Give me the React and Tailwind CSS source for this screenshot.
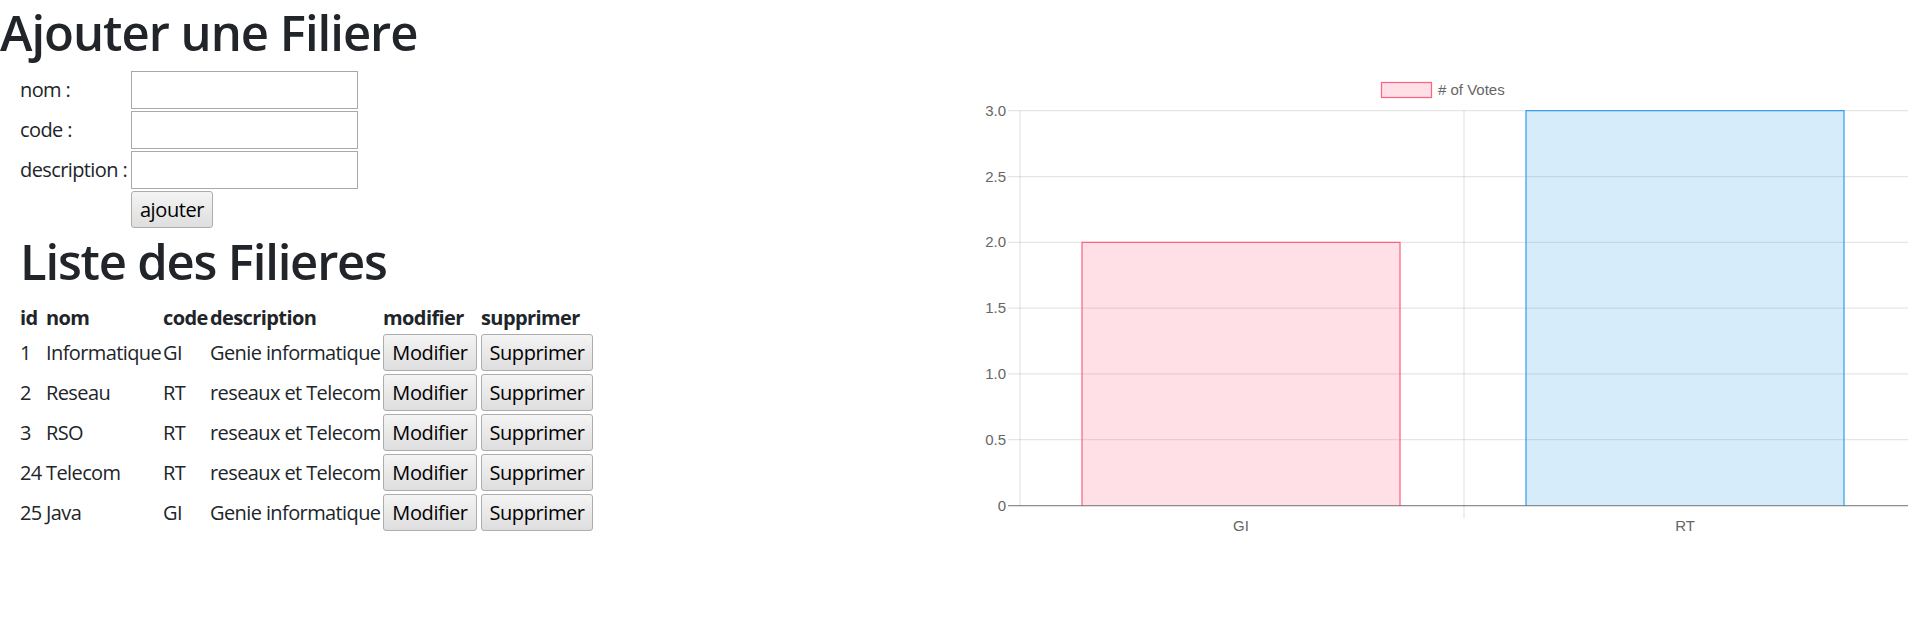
import React from 'react';

const filieres = [
  { id: 1, nom: 'Informatique', code: 'GI', description: 'Genie informatique' },
  { id: 2, nom: 'Reseau', code: 'RT', description: 'reseaux et Telecom' },
  { id: 3, nom: 'RSO', code: 'RT', description: 'reseaux et Telecom' },
  { id: 24, nom: 'Telecom', code: 'RT', description: 'reseaux et Telecom' },
  { id: 25, nom: 'Java', code: 'GI', description: 'Genie informatique' },
];

const cols = 'grid grid-cols-[26px_117px_47px_173px_98px_112px]';

function WinButton({ children, className = '' }) {
  return (
    <button
      className={`h-[37px] rounded-[3px] border border-[#adadad] bg-gradient-to-b from-[#f4f4f4] to-[#dedede] px-[7px] text-[20px] leading-none text-black tracking-[-0.4px] ${className}`}
    >
      {children}
    </button>
  );
}

function VotesChart() {
  // page coords minus 960
  const top = 110.7;
  const zero = 505.5;
  const step = (zero - top) / 6;
  const ticks = ['3.0', '2.5', '2.0', '1.5', '1.0', '0.5', '0'];
  const y2 = zero - step * 4;

  return (
    <svg width="960" height="560" className="block" style={{ fontFamily: '"Liberation Sans", Arial, sans-serif' }}>
      {/* legend */}
      <rect x="421.5" y="82.5" width="50" height="15" fill="rgba(255,99,132,0.2)" stroke="rgb(255,99,132)" strokeWidth="1.25" />
      <text x="478" y="95" fontSize="15" fill="#666">
        # of Votes
      </text>

      {/* grid */}
      {ticks.map((t, i) => {
        const y = top + step * i;
        const isZero = i === ticks.length - 1;
        return (
          <g key={t}>
            <line
              x1="48"
              x2="948"
              y1={y}
              y2={y}
              stroke={isZero ? 'rgba(0,0,0,0.25)' : 'rgba(0,0,0,0.1)'}
              strokeWidth="1.25"
            />
            <text x="46" y={y + 5} fontSize="15" fill="#666" textAnchor="end">
              {t}
            </text>
          </g>
        );
      })}
      <line x1="60" x2="60" y1={top} y2={zero} stroke="rgba(0,0,0,0.1)" strokeWidth="1.25" />
      <line x1="504" x2="504" y1={top} y2={zero + 13} stroke="rgba(0,0,0,0.1)" strokeWidth="1.25" />

      {/* bars */}
      <rect x="122" y={y2} width="318" height={zero - y2} fill="rgba(255,99,132,0.2)" />
      <path
        d={`M122 ${zero} V${y2} H440 V${zero}`}
        fill="none"
        stroke="rgb(255,99,132)"
        strokeWidth="1.25"
      />
      <rect x="566" y={top} width="318" height={zero - top} fill="rgba(54,162,235,0.2)" />
      <path
        d={`M566 ${zero} V${top} H884 V${zero}`}
        fill="none"
        stroke="rgb(54,162,235)"
        strokeWidth="1.25"
      />
      <line x1="48" x2="948" y1={zero} y2={zero} stroke="rgba(0,0,0,0.25)" strokeWidth="1.25" />

      {/* x labels */}
      <text x="281" y="531" fontSize="15" fill="#666" textAnchor="middle">
        GI
      </text>
      <text x="725" y="531" fontSize="15" fill="#666" textAnchor="middle">
        RT
      </text>
    </svg>
  );
}

export default function App() {
  return (
    <div className="flex min-h-[639px] w-[1920px] bg-white text-[#212529] font-['Open_Sans',sans-serif]">
      {/* left: form + table */}
      <div className="w-[960px]">
        <h1 className="text-[49px] font-semibold leading-[64px] tracking-[-1px]">Ajouter une Filiere</h1>

        <div className="ml-[18px] mt-[5.5px] text-[20px] tracking-[-0.6px]">
          {[ 'nom :', 'code :', 'description :' ].map((label) => (
            <div key={label} className="grid h-[40px] grid-cols-[113px_227px] items-center">
              <span className="pl-[2px]">{label}</span>
              <input type="text" className="h-[38px] w-[227px] border border-[#a9a9a9] bg-white" />
            </div>
          ))}
          <div className="grid h-[40px] grid-cols-[113px_227px] items-center">
            <span />
            <WinButton className="w-[82px]">ajouter</WinButton>
          </div>
        </div>

        <h2 className="ml-[20px] mt-[-0.5px] text-[49px] font-semibold leading-[64px] tracking-[-1.2px]">Liste des Filieres</h2>

        <div className="ml-[20px] mt-[9.5px] text-[20px] tracking-[-0.6px]">
          <div className={`${cols} h-[30px] items-center font-bold`}>
            <span>id</span>
            <span>nom</span>
            <span>code</span>
            <span>description</span>
            <span>modifier</span>
            <span>supprimer</span>
          </div>
          {filieres.map((f) => (
            <div key={f.id} className={`${cols} h-[40px] items-center whitespace-nowrap`}>
              <span>{f.id}</span>
              <span>{f.nom}</span>
              <span>{f.code}</span>
              <span>{f.description}</span>
              <span>
                <WinButton className="w-[94px]">Modifier</WinButton>
              </span>
              <span>
                <WinButton className="w-[112px]">Supprimer</WinButton>
              </span>
            </div>
          ))}
        </div>
      </div>

      {/* right: chart */}
      <div className="w-[960px]">
        <VotesChart />
      </div>
    </div>
  );
}
